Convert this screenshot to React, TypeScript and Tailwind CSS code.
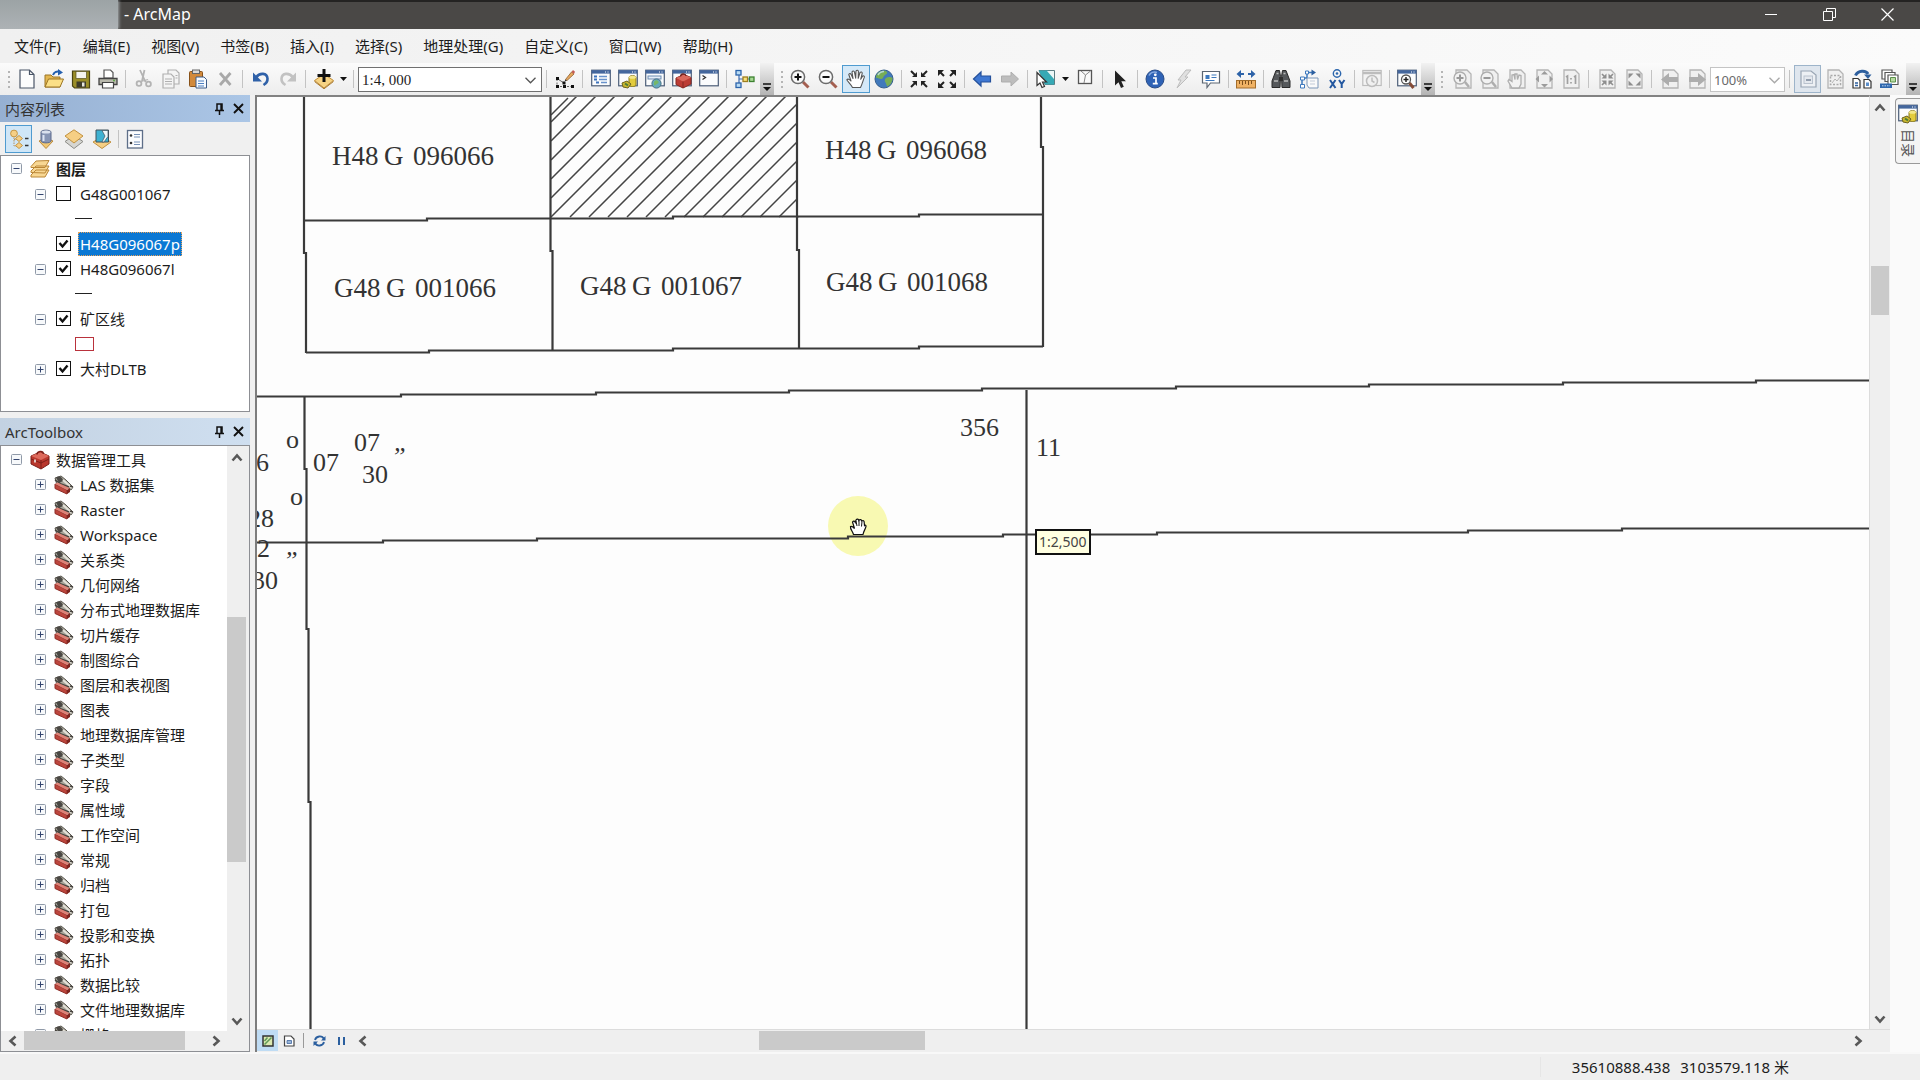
import { useState, type ReactNode } from "react";

const UI = "font-['Noto_Sans','Noto_Sans_CJK_SC',sans-serif]";

function Svg({ children, size = 20 }: { children: ReactNode; size?: number }) {
  return (
    <svg width={size} height={size} viewBox="0 0 20 20" fill="none" className="block shrink-0" aria-hidden="true">
      {children}
    </svg>
  );
}

/* ---------- toolbar icons ---------- */

const WindowFrame = () => (
  <>
    <rect x="0.7" y="1.2" width="18.6" height="15.6" fill="#fbfcfd" stroke="#4d5e78" strokeWidth="1.2" />
    <rect x="0.7" y="1.2" width="18.6" height="3.4" fill="#44679d" />
    <path d="M14 3h1M16.5 3h1" stroke="#fff" />
  </>
);

const PageGray = () => (
  <path d="M3 1h11l4 4v14H3z" fill="#f0f0f0" stroke="#b4b4b4" strokeWidth="1.3" />
);

const icons: Record<string, ReactNode> = {
  new: <path d="M3 1h9.500L17 5.500V19H3zM12.500 1v4.500H17" fill="#fdfdfd" stroke="#4b5668" strokeWidth="1.2" />,
  open: (
    <>
      <path d="M1 18V6h6l2 2h7v10z" fill="#e2b650" stroke="#9b7524" />
      <path d="M1 18l3.500-8H19.500L16 18z" fill="#fbdf86" stroke="#9b7524" />
      <path d="M9 6c1-3 4-4 7-3" stroke="#2560ae" strokeWidth="2" />
      <path d="M14 0l5 3.500-5 3z" fill="#2560ae" />
    </>
  ),
  save: (
    <>
      <path d="M1.500 2h17v17h-15l-2-2z" fill="#9a8e28" stroke="#494313" strokeWidth="1.2" />
      <rect x="5" y="2.500" width="10.500" height="7" fill="#f4f4ee" stroke="#57501a" strokeWidth=".7" />
      <rect x="5.500" y="12.500" width="9.500" height="6" fill="#3d3b2a" />
      <rect x="11" y="13.500" width="2.500" height="4" fill="#e7e7dd" />
    </>
  ),
  print: (
    <>
      <path d="M6 9V1h6.500L15 3.500V9z" fill="#fff" stroke="#555" strokeWidth="1.200" />
      <path d="M1 9.500h18v6H1z" fill="#b9b9ad" stroke="#444" strokeWidth="1.300" />
      <path d="M4.500 13.500h11V19h-11z" fill="#fff" stroke="#444" strokeWidth="1.200" />
      <circle cx="16" cy="11.500" r="1" fill="#5aa344" />
    </>
  ),
  cut: (
    <g stroke="#b3b3b3" strokeWidth="1.800">
      <path d="M6 1l5.500 12M10.500 1L8 12" />
      <circle cx="5" cy="14.500" r="2.400" />
      <circle cx="14.500" cy="15" r="2.400" />
      <path d="M7 12.500l7-2" strokeWidth="1.200" />
    </g>
  ),
  copy: (
    <g stroke="#b0b0b0" strokeWidth="1.200" fill="#f4f4f4">
      <path d="M7 1h8l3 3v11H7z" />
      <path d="M2 5h8l3 3v11H2z" />
      <path d="M4 10h7M4 12.500h7M4 15h7M14.500 6.500h2M14.500 9h2" />
    </g>
  ),
  paste: (
    <>
      <rect x="1.500" y="2.500" width="13" height="15" rx="1" fill="#d28a3c" stroke="#885118" />
      <rect x="4.500" y="1" width="7" height="3.500" fill="#dadada" stroke="#666" />
      <path d="M8 8h8l2.500 2.500V19H8z" fill="#f7fbff" stroke="#3c5c89" />
      <path d="M10 12h6M10 14.500h6M10 17h6" stroke="#4d7fc1" />
    </>
  ),
  del: <path d="M5 4l10.500 12M15.500 4L5 16" stroke="#a9a9a9" strokeWidth="2.800" />,
  undo: (
    <>
      <path d="M5 8.500C9 3 16 4 16.500 9.500c.2 3-1.500 5-4 6.500" stroke="#2f61a8" strokeWidth="2.600" />
      <path d="M2 3.500v9h9z" fill="#2f61a8" />
    </>
  ),
  redo: (
    <>
      <path d="M15 8.500C11 3 4 4 3.500 9.500c-.2 3 1.500 5 4 6.500" stroke="#c2c2c2" strokeWidth="2.600" />
      <path d="M18 3.500v9H9z" fill="#c2c2c2" />
    </>
  ),
  add: (
    <>
      <path d="M10 5l9.500 6.500L10 19 .5 11.500z" fill="#f6d384" stroke="#c08d38" />
      <path d="M.5 12.500L10 19.800l9.500-7.300" stroke="#a97a30" />
      <path d="M10 0v13M3.500 6.500h13" stroke="#111" strokeWidth="3" />
    </>
  ),
  editor: (
    <>
      <path d="M2 10v7.500h15" stroke="#666" strokeDasharray="2 1.500" />
      <path d="M2 9.500l7 4.500" stroke="#666" />
      <path d="M1 8h3v3H1zM1 16h3v3H1zM8 16h3v3H8zM16 16h3v3h-3zM7.500 12.500h3v3h-3z" fill="#111" />
      <path d="M10.500 10.500L16.500 3l2.500 2-7 6.500z" fill="#e8a860" stroke="#8c5f2d" strokeWidth=".8" />
      <path d="M16.500 3L18 1l2 1.700L19 5z" fill="#c45b53" />
      <path d="M9.500 12.500l1-2 1.500 1z" fill="#222" />
    </>
  ),
  toc: (
    <>
      <WindowFrame />
      <path d="M3 7.500h3M3 10.500h3M5 13.500h3" stroke="#3d73bd" strokeWidth="2" />
      <path d="M8 7.500h8M8 10.500h8M10 13.500h6" stroke="#6892cc" strokeWidth="1.300" />
    </>
  ),
  catalog: (
    <>
      <WindowFrame />
      <path d="M11 8.500c0-2.500 7-2.500 7 0v7.500c0 2-7 2-7 0z" fill="#e3cc3d" stroke="#8b7a1d" />
      <ellipse cx="14.500" cy="8.300" rx="3.500" ry="1.500" fill="#f4e88b" />
      <path d="M4 14l5-2 4 3-3 4-5-1z" fill="#c9b72f" stroke="#6c6320" />
      <path d="M7 14.500l3 2" stroke="#4d7c38" strokeWidth="2" />
    </>
  ),
  search: (
    <>
      <WindowFrame />
      <rect x="3" y="7" width="13" height="3" fill="#e3edf8" stroke="#6d8bb1" />
      <circle cx="11.500" cy="14.500" r="4.600" fill="#65aabd" stroke="#466f85" />
      <path d="M9 13c1-2 3-2 4-1s1 2-1 3-2 2-3 1z" fill="#77b867" />
    </>
  ),
  toolboxWin: (
    <>
      <WindowFrame />
      <path d="M4 9l8-3.500 7 3V15l-8 4-7-3.500z" fill="#bc3c34" stroke="#842720" />
      <path d="M4 9l7 3.500 8-4L12 5.500z" fill="#da685c" />
      <path d="M8.500 7.500c0-3 5-3.500 5.500-.5" stroke="#742520" strokeWidth="1.300" />
      <path d="M11 12.500V19" stroke="#842720" />
    </>
  ),
  python: (
    <>
      <WindowFrame />
      <path d="M3.500 6.500l3 2-3 2" stroke="#333" strokeWidth="1.300" />
    </>
  ),
  model: (
    <>
      <path d="M4 4v12M4 10h5M13 10h3" stroke="#3f6db0" strokeWidth="1.200" />
      <rect x="1" y="1.500" width="5" height="4.500" fill="#b9dbf4" stroke="#2b64ab" strokeWidth="1.300" />
      <rect x="1" y="14" width="5" height="4.500" fill="#b9dbf4" stroke="#2b64ab" strokeWidth="1.300" />
      <rect x="8" y="8" width="4.500" height="4.500" fill="#fbe27a" stroke="#9d7e20" strokeWidth="1.300" />
      <rect x="14.500" y="8" width="4.500" height="4.500" fill="#a6d893" stroke="#3c8130" strokeWidth="1.300" />
    </>
  ),
  zoomin: (
    <>
      <path d="M13 13l5.500 5.500" stroke="#a45f50" strokeWidth="3" />
      <circle cx="8" cy="8" r="6.600" fill="#fafafa" stroke="#6b6b6b" strokeWidth="1.500" />
      <path d="M8 4.500v7M4.500 8h7" stroke="#111" strokeWidth="2" />
    </>
  ),
  zoomout: (
    <>
      <path d="M13 13l5.500 5.500" stroke="#a45f50" strokeWidth="3" />
      <circle cx="8" cy="8" r="6.600" fill="#fafafa" stroke="#6b6b6b" strokeWidth="1.500" />
      <path d="M4.500 8h7" stroke="#111" strokeWidth="2" />
    </>
  ),
  hand: (
    <path
      d="M6.500 18.500C5 15.500 2 13 .8 10.800c1-1.300 2.500-.5 4.200 1.200L2.800 5.500c.8-1.500 2-1 2.500.2L7 9.500 6 3c.7-1.400 2.100-1.200 2.500.2l1.200 6L10 2c.8-1.200 2.200-1 2.400.3l-.2 7L14 3.500c1-1 2.300-.5 2.200.8l-1.500 6 2-3.300c1.200-.5 2 .2 1.600 1.400-1.300 3.200-2 6.500-3.800 10.100z"
      fill="#fff"
      stroke="#555"
      strokeWidth="1.100"
      strokeLinejoin="round"
    />
  ),
  globe: (
    <>
      <circle cx="10" cy="10" r="9" fill="#4179bb" stroke="#365f8d" />
      <path d="M4 4c3-3 8-2.500 9-1 1 2-2 2.500-3 4s-1 3-3 3-4-2-5-1c0-2 .5-3.500 2-5zM12 9c2-1.500 5-1 6.500 0 0 4-2 7-5 8.500-1.500-1-1-3-2-4s-1-3.500.5-4.500z" fill="#77ad55" />
      <path d="M4 6c1.500-2.500 3.500-3.500 6-3.500" stroke="#c6e2ee" strokeWidth="1.600" opacity=".8" />
    </>
  ),
  fixin: (
    <g stroke="#222" strokeWidth="2" fill="#222">
      <path d="M2 2l4 4M18 2l-4 4M2 18l4-4M18 18l-4-4" />
      <path d="M8 3v5H3zM12 3v5h5zM8 17v-5H3zM12 17v-5h5z" stroke="none" />
    </g>
  ),
  fixout: (
    <g stroke="#222" strokeWidth="2" fill="#222">
      <path d="M3 3l4 4M17 3l-4 4M3 17l4-4M17 17l-4-4" />
      <path d="M1 1h6L1 7zM19 1h-6l6 6zM1 19h6l-6-6zM19 19h-6l6-6z" stroke="none" />
    </g>
  ),
  back: <path d="M1.500 10l7.500-7v4h9.500v6H9v4z" fill="#3f78d2" stroke="#24509b" strokeWidth="1.200" />,
  fwd: <path d="M18.500 10L11 3v4H1.500v6H11v4z" fill="#bdbdbd" stroke="#adadad" />,
  select: (
    <>
      <path d="M4 1.500h15.500v14H10z" fill="#a8dbe0" stroke="#5c7d83" />
      <path d="M4 1.500h9l6 8v6h-9z" fill="#36a9b5" />
      <path d="M12 2h7v8z" fill="#ecf7f7" />
      <path d="M2 3.500v13l3-2.500 2 4.500 2.500-1-2-4.500h4z" fill="#fff" stroke="#333" strokeWidth="1.200" />
    </>
  ),
  clear: (
    <>
      <rect x="3.500" y="1.500" width="13" height="13" fill="#fafafa" stroke="#555" strokeWidth="1.300" />
      <path d="M6 2l4.500 4L9 14M10.500 6l5-4" stroke="#888" />
    </>
  ),
  pointer: <path d="M5 1.500v15l3.500-3.200L11 19l2.800-1.200-2.500-5.500H16z" fill="#222" />,
  info: (
    <>
      <circle cx="10" cy="10" r="9" fill="#2e62b5" stroke="#284b86" />
      <path d="M4 6.500c1.500-3 5-4 8-3" stroke="#88aae0" strokeWidth="1.600" />
      <circle cx="10.300" cy="5.800" r="1.400" fill="#fff" />
      <path d="M8 9h3v5.500h1.700M7.800 14.700h5" stroke="#fff" strokeWidth="1.700" />
    </>
  ),
  bolt: <path d="M13 1h5l-6 7h3L4 19l4-8H5z" fill="#e0e0e0" stroke="#bcbcbc" />,
  popup: (
    <>
      <path d="M1.500 2.500h17v11.500h-9L6 18.500V14H1.500z" fill="#fff" stroke="#5c6672" strokeWidth="1.200" />
      <rect x="4.500" y="6" width="4" height="4" fill="#3d78bd" />
      <path d="M10.500 6h5M10.500 8.500h5M4.500 11.500h9" stroke="#3d78bd" strokeWidth="1.200" />
    </>
  ),
  measure: (
    <>
      <path d="M3 5h5M12 5h5" stroke="#2c62a8" strokeWidth="2" />
      <path d="M.5 5l4.500-4v8zM19.500 5L15 1v8z" fill="#2c62a8" />
      <rect x=".5" y="11.500" width="19" height="7.500" fill="#f0b264" stroke="#a36d2a" />
      <path d="M3.500 12v3M6.500 12v4M9.500 12v3M12.500 12v4M15.500 12v3" stroke="#7d501c" />
    </>
  ),
  find: (
    <>
      <path d="M5 1.500h3.500l1 6-.5 11H1V12zM15 1.500h-3.500l-1 6 .5 11h8V12z" fill="#55585b" stroke="#2a2a2a" />
      <path d="M8 8h4v4H8z" fill="#2f2f2f" />
      <path d="M3 12h4M13 12h4M5.500 4.500h2M12.500 4.500h2" stroke="#bbb" strokeWidth="1.400" />
    </>
  ),
  route: (
    <>
      <path d="M3 18v-9h5V3.500h6" stroke="#3d78bd" strokeWidth="1.500" />
      <path d="M12.500.5L17 3.500l-4.500 3z" fill="#2b5f9f" />
      <path d="M1.500 15.500h4V19h-4zM1.500 8h4v3h-4zM6.500 2h3v3h-3z" fill="#fff" stroke="#3d78bd" />
      <path d="M8 9h11v10H10l-2-3z" fill="#fafafa" stroke="#7d97b8" />
      <path d="M11 12h5M11 15h5" stroke="#c2cbd8" />
    </>
  ),
  xy: (
    <>
      <circle cx="10" cy="4.500" r="3.700" stroke="#2c66ad" strokeWidth="1.400" />
      <circle cx="10" cy="4.500" r="1.300" fill="#2c66ad" />
      <path d="M3 11l5.500 8M8.500 11L3 19M12 11l2.700 4L17.500 11M14.700 15v4" stroke="#2458a0" strokeWidth="2" />
    </>
  ),
  time: (
    <g stroke="#bdbdbd">
      <rect x=".8" y="1.500" width="18.400" height="15" fill="#f3f3f3" strokeWidth="1.200" />
      <path d="M1 4h18" strokeWidth="2.500" />
      <circle cx="10" cy="12" r="5.500" fill="#f0f0f0" strokeWidth="1.500" />
      <path d="M10 8.500V12l2.500 1.500" strokeWidth="1.500" />
    </g>
  ),
  viewer: (
    <>
      <WindowFrame />
      <path d="M12.500 14l4 5" stroke="#844b37" strokeWidth="3" />
      <circle cx="9" cy="10.500" r="4.500" fill="#fff" stroke="#555" strokeWidth="1.300" />
      <path d="M9 8v5M6.500 10.500h5" stroke="#222" strokeWidth="1.500" />
    </>
  ),
  pzin: (
    <g stroke="#aeaeae" strokeWidth="1.400">
      <PageGray />
      <path d="M12 13l4 5" strokeWidth="2.500" />
      <circle cx="7" cy="9" r="6" fill="#f2f2f2" />
      <path d="M7 5.500v7M3.500 9h7" stroke="#999" strokeWidth="2" />
    </g>
  ),
  pzout: (
    <g stroke="#aeaeae" strokeWidth="1.400">
      <PageGray />
      <path d="M12 13l4 5" strokeWidth="2.500" />
      <circle cx="7" cy="9" r="6" fill="#f2f2f2" />
      <path d="M3.500 9h7" stroke="#999" strokeWidth="2" />
    </g>
  ),
  phand: (
    <g stroke="#aeaeae" strokeWidth="1.300">
      <PageGray />
      <path d="M5 19l-4-7 1-1.500 3 2V6l2-.5 1 5V5h2l.5 5.500L12 6l2 .5V15l-2 4z" fill="#f2f2f2" />
    </g>
  ),
  pfull: (
    <>
      <PageGray />
      <path d="M10.500 2l3.500 3.500H7zM10.500 18.500L7 15h7zM1.500 10L5 6.500v7zM19 10l-3.500-3.500v7z" fill="#9c9c9c" />
    </>
  ),
  p11: (
    <>
      <PageGray />
      <path d="M5 8l1.500-1v8M13 8l1.500-1v8M10 9v1.500M10 13v1.500" stroke="#a0a0a0" strokeWidth="1.700" />
    </>
  ),
  pfixin: (
    <>
      <PageGray />
      <path d="M9.500 4.500v5h-5zM11.500 4.500v5h5zM9.500 16.500v-5h-5zM11.500 16.500v-5h5z" fill="#8e8e8e" />
      <path d="M5 5l3 3M16 5l-3 3M5 16l3-3M16 16l-3-3" stroke="#8e8e8e" strokeWidth="1.600" />
    </>
  ),
  pfixout: (
    <>
      <PageGray />
      <path d="M4.500 4.500h5l-5 5zM16.500 4.500h-5l5 5zM4.500 16.500h5l-5-5zM16.500 16.500h-5l5-5z" fill="#8e8e8e" />
    </>
  ),
  pback: (
    <>
      <PageGray />
      <path d="M1 10.500L9 4v4h9v5H9v4z" fill="#adadad" />
    </>
  ),
  pfwd: (
    <>
      <PageGray />
      <path d="M19 10.500L11 4v4H2v5h9v4z" fill="#adadad" />
    </>
  ),
  draft: (
    <>
      <path d="M3 2h10l5 4v12H3z" fill="#edf0f4" stroke="#98a4b3" strokeWidth="1.200" />
      <rect x="6" y="7" width="8.500" height="7.500" fill="#e4e8ee" stroke="#b9c2ce" />
      <path d="M8 11h5" stroke="#8996a6" strokeWidth="1.800" />
    </>
  ),
  focus: (
    <>
      <PageGray />
      <path d="M5.500 6.500h10v9h-10z" stroke="#aaa" strokeWidth="1.500" strokeDasharray="2 1.500" />
      <path d="M7 14l3-4 2 2 3-4" stroke="#b5b5b5" />
    </>
  ),
  change: (
    <>
      <path d="M3.500 6.500C6 1 14 1 16 5" stroke="#2d5f9e" strokeWidth="3" />
      <path d="M12 5.500h7.500L16 10z" fill="#2d5f9e" />
      <path d="M1 9.500h5l2 2V19H1zM12 10.500h5l2 2V19h-7z" fill="#fff" stroke="#333" strokeWidth="1.200" />
      <path d="M3 14h3M3 16.500h3" stroke="#2d5f9e" strokeWidth="1.500" />
      <path d="M14 13.500h3V17h-3z" fill="#5c8fcb" />
    </>
  ),
  ddp: (
    <>
      <path d="M3 1h10v9H3z" fill="#fff" stroke="#555" strokeWidth="1.200" />
      <path d="M6 3.500h10v9H6z" fill="#fff" stroke="#555" strokeWidth="1.200" />
      <path d="M9 6h10v9.500H9z" fill="#fff" stroke="#555" strokeWidth="1.200" />
      <path d="M11.500 8.500h5V13h-5z" fill="#b7dba0" stroke="#5b8f4a" />
      <path d="M1 14.500h12V19H1z" fill="#2f67ae" />
      <path d="M3 16.800h8" stroke="#bcd4ef" strokeDasharray="1.500 1" />
    </>
  ),
  listDrawing: (
    <>
      <path d="M5 6v11h9M5 10.500h7" stroke="#b79058" strokeDasharray="1.500 1" />
      <circle cx="5" cy="4.500" r="3.400" fill="#f5cf86" stroke="#c59644" />
      <path d="M10 6.500l3.500 3-3.500 3-3.500-3zM10 13.500l3.500 3-3.500 3-3.500-3z" fill="#f5cf86" stroke="#c59644" />
      <path d="M16 9.500h3.500M16 16.500h3.500" stroke="#333" strokeWidth="1.600" />
    </>
  ),
  listSource: (
    <>
      <path d="M3 12l7-3 7 3-7 7.500z" fill="#f2c874" stroke="#bb8a3b" />
      <path d="M5 3c0-2.500 10-2.500 10 0v9c0 2.500-10 2.500-10 0z" fill="#8795b5" stroke="#5c6a8c" />
      <ellipse cx="10" cy="3" rx="4.500" ry="1.600" fill="#d9e0ee" />
      <path d="M7.500 6v6" stroke="#dbe3f3" strokeWidth="2" />
    </>
  ),
  listVisible: (
    <>
      <path d="M10 6.500l9 6-9 7-9-7z" fill="#d6d6d2" stroke="#8d8d88" />
      <path d="M10 .8l9 6.200-9 7-9-7z" fill="#f6cf84" stroke="#c1913f" />
    </>
  ),
  listSelection: (
    <>
      <path d="M10 8l9 5-9 6.500L1 13z" fill="#f6cf84" stroke="#c1913f" />
      <path d="M4 1h12.500v12H4z" fill="#3eb2d2" stroke="#41525c" />
      <path d="M10 1.500h6v6l-4 5.500h-2l3-6z" fill="#eef8fa" stroke="#41525c" strokeWidth=".7" />
    </>
  ),
  options: (
    <>
      <rect x="2.500" y="1.500" width="15" height="17.500" fill="#fbfcfe" stroke="#5d6e88" strokeWidth="1.300" />
      <circle cx="6" cy="6.500" r="1.300" fill="#333" />
      <circle cx="6" cy="14" r="1.300" fill="#333" />
      <path d="M9 5.500h6M9 8h6M9 13h6M9 15.500h6" stroke="#7690b5" strokeWidth="1.200" />
    </>
  ),
};

type Item = [string, string] | "|" | "v";

const standardItems: Item[] = [
  ["new", "新建"], ["open", "打开"], ["save", "保存"], ["print", "打印"], "|",
  ["cut", "剪切"], ["copy", "复制"], ["paste", "粘贴"], ["del", "删除"], "|",
  ["undo", "撤消"], ["redo", "恢复"], "|",
  ["add", "添加数据"], "v", "|",
];
const windowItems: Item[] = [
  "|", ["editor", "编辑器工具条"], "|",
  ["toc", "内容列表"], ["catalog", "目录"], ["search", "搜索"], ["toolboxWin", "ArcToolbox"], ["python", "Python"], "|",
  ["model", "模型构建器"],
];
const toolItems: Item[] = [
  ["zoomin", "放大"], ["zoomout", "缩小"], ["hand", "平移"], ["globe", "全图"], "|",
  ["fixin", "固定比例放大"], ["fixout", "固定比例缩小"], "|",
  ["back", "上一视图"], ["fwd", "下一视图"], "|",
  ["select", "选择要素"], "v", ["clear", "清除所选要素"], "|",
  ["pointer", "选择元素"], "|",
  ["info", "识别"], ["bolt", "超链接"], ["popup", "HTML 弹出窗口"], "|",
  ["measure", "测量"], "|",
  ["find", "查找"], ["route", "查找路径"], ["xy", "转到 XY"], "|",
  ["time", "时间滑块"], "|", ["viewer", "创建查看器窗口"],
];
const layoutItems: Item[] = [
  ["pzin", "页面放大"], ["pzout", "页面缩小"], ["phand", "页面平移"], ["pfull", "缩放整个页面"], ["p11", "缩放至 100%"], "|",
  ["pfixin", "页面固定放大"], ["pfixout", "页面固定缩小"], "|",
  ["pback", "返回"], ["pfwd", "前进"],
];
const layoutEndItems: Item[] = [
  "|", ["draft", "切换描绘模式"], ["focus", "聚焦数据框"], ["change", "更改布局"], ["ddp", "数据驱动页面"],
];

function ToolItems({ items, wide = false }: { items: Item[]; wide?: boolean }) {
  return (
    <>
      {items.map((it, i) => {
        if (it === "|")
          return (
            <span key={i} className={`flex shrink-0 justify-center ${wide ? "w-[7px]" : "w-[9px]"}`}>
              <span className="h-[18px] w-px bg-[#c3c3c3]" />
            </span>
          );
        if (it === "v")
          return (
            <button key={i} aria-label="更多" className="flex w-3 shrink-0 justify-center">
              <svg width="7" height="4" viewBox="0 0 7 4"><path d="M0 0h7L3.500 4z" fill="#111" /></svg>
            </button>
          );
        const state =
          it[0] === "hand"
            ? "border border-[#4f9bd0] bg-[#d5e9f8]"
            : it[0] === "draft"
              ? "border border-[#9db4ca] bg-[#dfe6ee]"
              : "";
        return (
          <button
            key={i}
            aria-label={it[1]}
            title={it[1]}
            className={`flex h-7 shrink-0 items-center justify-center ${wide ? "w-7" : "w-[27px]"} ${state}`}
          >
            <Svg>{icons[it[0]]}</Svg>
          </button>
        );
      })}
    </>
  );
}

function Grip({ className = "" }: { className?: string }) {
  return (
    <span className={`flex shrink-0 flex-col items-center justify-center gap-[3px] ${className}`}>
      {[0, 1, 2, 3].map((i) => (
        <span key={i} className="size-[2px] bg-[#b5b5b5]" />
      ))}
    </span>
  );
}

function Overflow() {
  return (
    <button aria-label="工具条选项" className="flex h-8 w-[14px] shrink-0 items-end justify-center bg-linear-to-b from-[#f2f2f2] to-[#b4b4b4] pb-1">
      <svg width="8" height="8" viewBox="0 0 8 8"><path d="M0 1h8" stroke="#111" strokeWidth="1.500" /><path d="M0 4h8L4 8z" fill="#111" /></svg>
    </button>
  );
}

function Chevron({ dir }: { dir: "up" | "down" | "left" | "right" }) {
  const d = {
    up: "M1.500 8.500L6 3.500l4.500 5",
    down: "M1.500 3.500L6 8.500l4.500-5",
    left: "M8.500 1.500L3.500 6l5 4.500",
    right: "M3.500 1.500L8.500 6l-5 4.500",
  }[dir];
  return (
    <svg width="12" height="12" viewBox="0 0 12 12" fill="none"><path d={d} stroke="#585858" strokeWidth="2.600" /></svg>
  );
}

/* ---------- left panels ---------- */

function PanelHeader({ title, tone }: { title: string; tone: string }) {
  return (
    <header className={`flex h-[27px] shrink-0 items-center pr-[2px] pl-[5px] ${tone}`}>
      <h2 className="flex-1 text-[15px] leading-5 text-[#333]">{title}</h2>
      <button aria-label={`固定${title}`} className="flex w-[19px] justify-center">
        <svg width="11" height="12" viewBox="0 0 11 12" fill="none"><path d="M3 7V1h5v6M1 7.500h9M5.500 8v4" stroke="#111" strokeWidth="1.500" /><path d="M7.200 1v6" stroke="#111" strokeWidth="1.800" /></svg>
      </button>
      <button aria-label={`关闭${title}`} className="flex w-[19px] justify-center">
        <svg width="11" height="11" viewBox="0 0 11 11"><path d="M1 1l9 9M10 1l-9 9" stroke="#111" strokeWidth="1.900" /></svg>
      </button>
    </header>
  );
}

function Expander({ open }: { open: boolean }) {
  return (
    <button aria-label={open ? "折叠" : "展开"} className="shrink-0">
      <svg width="11" height="11" viewBox="0 0 11 11" className="block">
        <rect x=".5" y=".5" width="10" height="10" rx="1" fill="#f7f9fb" stroke="#909aa8" />
        <path d={open ? "M2.500 5.500h6" : "M2.500 5.500h6M5.500 2.500v6"} stroke="#34456f" />
      </svg>
    </button>
  );
}

function LayerRow({ name, checked, expander, selected }: { name: string; checked: boolean; expander?: boolean; selected?: boolean }) {
  const [on, setOn] = useState(checked);
  return (
    <li className="flex h-[25px] items-center pl-[34px]">
      <span className="w-[21px] shrink-0">{expander !== undefined && <Expander open={expander} />}</span>
      <label className="flex items-center gap-[7px]">
        <span className="grid size-[15px] shrink-0">
          <input type="checkbox" checked={on} onChange={() => setOn(!on)} className="col-start-1 row-start-1 size-[15px] appearance-none border border-[#111] bg-white" />
          {on && (
            <svg viewBox="0 0 15 15" className="pointer-events-none col-start-1 row-start-1" fill="none"><path d="M3.500 7l3 3.500 5-6" stroke="#111" strokeWidth="2.400" /></svg>
          )}
        </span>
        <span className={`border border-dotted px-px text-[15px] leading-[22px] ${selected ? "border-[#e8a35b] bg-[#0a78d4] text-white" : "border-transparent"}`}>{name}</span>
      </label>
    </li>
  );
}

function LineSymbol() {
  return (
    <li className="flex h-[25px] items-center pl-[74px]"><span className="h-px w-[17px] bg-[#222]" /></li>
  );
}

function ToolsetIcon() {
  return (
    <Svg>
      <path d="M1 3l6-2 5 4 7 7-2 3-6-3-8-2z" fill="#a9a79c" stroke="#5b5850" />
      <path d="M2 2.500c3-2.500 7 0 7 3.500L5 8z" fill="#4a4844" />
      <path d="M9 5l9 8" stroke="#e3e1d8" strokeWidth="2" />
      <path d="M1 5l6 4 8 3M16 11l3 1" stroke="#45423d" strokeWidth="1.500" />
      <path d="M1 9l12 6v4L1 13.500z" fill="#bd453c" stroke="#8d2d26" />
      <path d="M1 9l2.500-1.500L15.500 13 13 15z" fill="#dd8276" />
      <path d="M13 15l3-2v4l-3 2z" fill="#7d241e" />
    </Svg>
  );
}

const toolsets = [
  "LAS 数据集", "Raster", "Workspace", "关系类", "几何网络", "分布式地理数据库", "切片缓存", "制图综合",
  "图层和表视图", "图表", "地理数据库管理", "子类型", "字段", "属性域", "工作空间", "常规", "归档", "打包",
  "投影和变换", "拓扑", "数据比较", "文件地理数据库", "栅格",
];

function Contents() {
  return (
    <section className="flex shrink-0 flex-col">
      <PanelHeader title="内容列表" tone="bg-linear-to-r from-[#96b0d2] to-[#abc6e6]" />
      <div className="flex h-[33px] items-center pl-[5px]">
        {["listDrawing", "listSource", "listVisible", "listSelection"].map((n, i) => (
          <button key={n} aria-label={["按绘制顺序列出", "按源列出", "按可见性列出", "按选择列出"][i]} className={`flex h-7 items-center justify-center ${i === 0 ? "w-[27px] border border-[#4f9bd0] bg-[#cfe6f7]" : "w-7"}`}>
            <Svg>{icons[n]}</Svg>
          </button>
        ))}
        <span className="mx-[2px] h-[18px] w-px bg-[#c3c3c3]" />
        <button aria-label="选项" className="flex w-7 justify-center"><Svg>{icons.options}</Svg></button>
      </div>
      <ul className="h-[257px] overflow-hidden border border-[#8d8f94] bg-white">
        <li className="flex h-[25px] items-center pl-[10px]">
          <Expander open />
          <span className="mr-[6px] ml-2">
            <Svg>
              <path d="M1 16l5-5h13l-4 7H1zM1 12l5-5h13l-4 7-14-.5zM1 7.500L6 2l13-.5-4 7H1z" fill="#f8d793" stroke="#bb8737" />
            </Svg>
          </span>
          <span className="text-[15px] leading-5 font-bold">图层</span>
        </li>
        <LayerRow name="G48G001067" checked={false} expander />
        <LineSymbol />
        <LayerRow name="H48G096067p" checked selected />
        <LayerRow name="H48G096067l" checked expander />
        <LineSymbol />
        <LayerRow name="矿区线" checked expander />
        <li className="flex h-[25px] items-center pl-[74px]"><span className="h-[14px] w-[19px] border border-[#b9323c]" /></li>
        <LayerRow name="大村DLTB" checked expander={false} />
      </ul>
    </section>
  );
}

function Toolbox() {
  return (
    <section className="mt-[6px] flex min-h-0 flex-1 flex-col">
      <PanelHeader title="ArcToolbox" tone="bg-linear-to-r from-[#c3d2e2] to-[#cfdff0]" />
      <div className="flex min-h-0 flex-1 flex-col border border-[#8d8f94] bg-white">
        <div className="flex min-h-0 flex-1">
          <ul className="min-w-0 flex-1 overflow-hidden pt-px">
            <li className="flex h-[25px] items-center pl-[10px]">
              <Expander open />
              <span className="mr-[6px] ml-2">
                <Svg>
                  <path d="M1 6l9-4 9 4v8l-8 5L1 14z" fill="#b9372d" stroke="#7c1f19" />
                  <path d="M1 6l9-4 9 4-8 4z" fill="#dd6a5c" />
                  <path d="M7 4.500C7 1 13 0 13.500 4" stroke="#7c1f19" strokeWidth="1.500" />
                  <path d="M11 10v9M1 9l10 4 8-4" stroke="#7c1f19" />
                  <path d="M5 9.500v3" stroke="#e9d9d5" strokeWidth="1.800" />
                </Svg>
              </span>
              <span className="text-[15px] leading-5">数据管理工具</span>
            </li>
            {toolsets.map((t) => (
              <li key={t} className="flex h-[25px] items-center pl-[34px]">
                <Expander open={false} />
                <span className="mr-[6px] ml-2"><ToolsetIcon /></span>
                <span className="text-[15px] leading-5 whitespace-nowrap">{t}</span>
              </li>
            ))}
          </ul>
          <div className="flex w-[19px] shrink-0 flex-col bg-[#efefef]">
            <button aria-label="向上滚动" className="flex h-6 items-center justify-center"><Chevron dir="up" /></button>
            <div className="flex-[147]" />
            <div className="flex-[244] bg-[#cacaca]" />
            <div className="flex-[149]" />
            <button aria-label="向下滚动" className="flex h-5 items-center justify-center"><Chevron dir="down" /></button>
          </div>
          <div className="w-[3px] shrink-0 bg-[#efefef]" />
        </div>
        <div className="flex h-5 shrink-0 bg-[#efefef]">
          <button aria-label="向左滚动" className="flex w-[23px] items-center justify-center"><Chevron dir="left" /></button>
          <div className="mb-px flex-[161] bg-[#cacaca]" />
          <div className="flex-[18]" />
          <button aria-label="向右滚动" className="flex w-[25px] items-center justify-center"><Chevron dir="right" /></button>
          <div className="w-[21px]" />
        </div>
      </div>
    </section>
  );
}

/* ---------- map canvas (drawn in map pixels, origin 257,97) ---------- */

const sheetLabels: [number, number, string, string][] = [
  [332, 165, "H48", "096066"],
  [825, 159, "H48", "096068"],
  [334, 297, "G48", "001066"],
  [580, 295, "G48", "001067"],
  [826, 291, "G48", "001068"],
];

const marks: [number, number, string][] = [
  [286, 448, "o"], [290, 505, "o"], [256, 471, "6"], [313, 471, "07"], [354, 451, "07"], [362, 483, "30"],
  [248, 527, "28"], [257, 557, "2"], [252, 589, "30"], [960, 436, "356"], [1036, 456, "11"],
];

const hatch = Array.from({ length: 19 }, (_, k) => {
  const c = 673 + k * 19;
  const x1 = Math.max(551, c - 217);
  const x2 = Math.min(797, c - 96);
  return `M${x1} ${c - x1}L${x2} ${c - x2}`;
}).join("");

function MapCanvas() {
  return (
    <div className="relative min-h-0 min-w-0 flex-1 overflow-hidden bg-[#fdfdfd]">
      <svg width="1613" height="936" viewBox="257 97 1613 936" fill="none" className="absolute top-0 left-0" role="img" aria-label="地图">
        <circle cx="858" cy="526" r="30" fill="#f8f9b2" />
        <path d={`${hatch}M551 115L568 98`} stroke="#444" strokeWidth="1.500" />
        <g stroke="#3a3a3a" strokeWidth="2.200">
          <path d="M304 96V253H306V353M550.500 96V251H552.500V350M797 96V250H799V348M1041 96V147H1043V347" />
          <path d="M304 220.500H427V218.500H673V216.500H919V214.500H1043" />
          <path d="M306 352.500H429V350.500H673V348.500H919V346.500H1043" />
          <path d="M256 396.500H401V394.500H596V392.500H789V390.500H982V388.500H1176V386.500H1369V384.500H1563V382.500H1756V380.500H1870" />
          <path d="M256 542.500H383V540.500H537V538.500H848V536.500H1003V534.500H1157V532.500H1468V530.500H1622V528.500H1870" />
          <path d="M304.500 396V469H306.500V629H308.500V802H310.500V1032M1026.500 390V1032" />
        </g>
        <g fill="#333" className="font-['Liberation_Serif','Noto_Sans_CJK_SC',serif] text-[27px]">
          {sheetLabels.map(([x, y, a, b]) => (
            <g key={a + b}>
              <text x={x} y={y}>{a}</text>
              <text x={x + 52} y={y}>G</text>
              <text x={x + 81} y={y}>{b}</text>
            </g>
          ))}
        </g>
        <g fill="#333" className="font-['Liberation_Serif','Noto_Sans_CJK_SC',serif] text-[26px]">
          {marks.map(([x, y, t]) => (
            <text key={`${x}-${y}`} x={x} y={y}>{t}</text>
          ))}
          <text x="394" y="451" className="italic">„</text>
          <text x="286" y="555" className="italic">„</text>
        </g>
        <path
          d="M853.500 534.500C852.500 531 850 529 850.500 526.500c1.500-.8 2.700.5 4 2L852.500 522c1-1.500 2.200-1 2.800.5L856 520c1-1.300 2.500-1 2.800.5 1-1.500 2.600-1 2.900.5 1.500-1 2.600 0 2.500 1.500l.3 3c1-.8 1.600-.3 1.500.8-.6 3-2.500 5-3 8.200z"
          fill="#fff"
          stroke="#111"
          strokeWidth="1.200"
        />
        <path d="M856 521l1 5M859 520.500v5.500M862 521.500l-.5 5" stroke="#111" />
      </svg>
      <div role="tooltip" className="absolute top-[432px] left-[778px] border-2 border-[#111] bg-[#ffffe1] px-0.5 text-sm leading-[22px] text-[#444]">1:2,500</div>
    </div>
  );
}

function MapFooter() {
  return (
    <div className="flex h-[23px] shrink-0 items-stretch border-t border-[#dcdcdc] bg-[#efefef] pb-px">
      <button aria-label="数据视图" className="flex w-[21px] items-center justify-center bg-[#bfdcf4]">
        <svg width="12" height="12" viewBox="0 0 12 12"><rect x="1" y="1" width="10" height="10" fill="#dbe8b0" stroke="#333" strokeWidth="1.500" /><path d="M2.500 9.500l7-7M2.500 6l3-3.500" stroke="#5f9a57" strokeWidth="1.500" /></svg>
      </button>
      <button aria-label="布局视图" className="flex w-[22px] items-center justify-center">
        <svg width="12" height="12" viewBox="0 0 12 12" fill="#fff"><path d="M1.500 1H8l3 3v7H1.500z" stroke="#444" strokeWidth="1.200" /><path d="M4 5.500h4.500v3H4z" fill="#9ab6d8" stroke="#3f66a0" strokeWidth=".8" /></svg>
      </button>
      <span className="mx-[3px] my-[3px] w-px bg-[#999]" />
      <button aria-label="刷新" className="flex w-[25px] items-center justify-center">
        <svg width="13" height="12" viewBox="0 0 13 12" fill="none"><path d="M2 5C3 1 9 0 11 4M11 7C10 11 4 12 2 8" stroke="#2b5f9f" strokeWidth="1.800" /><path d="M12.500 1v4.500H8zM.5 11V6.500H5z" fill="#2b5f9f" /></svg>
      </button>
      <button aria-label="暂停绘制" className="flex w-[18px] items-center justify-center gap-[3px]">
        <span className="h-2 w-[2px] bg-[#2b5f9f]" /><span className="h-2 w-[2px] bg-[#2b5f9f]" />
      </button>
      <button aria-label="向左滚动" className="flex w-[26px] items-center justify-center"><Chevron dir="left" /></button>
      <div className="flex-[383]" />
      <div className="my-px flex-[166] bg-[#cacaca]" />
      <div className="flex-[922]" />
      <button aria-label="向右滚动" className="flex w-6 items-center justify-center"><Chevron dir="right" /></button>
      <div className="w-5" />
    </div>
  );
}

const menus = ["文件(F)", "编辑(E)", "视图(V)", "书签(B)", "插入(I)", "选择(S)", "地理处理(G)", "自定义(C)", "窗口(W)", "帮助(H)"];

export default function App() {
  return (
    <div className={`flex h-screen flex-col overflow-hidden bg-[#f0f0f0] text-[#1c1c1c] ${UI}`}>
      <div className="flex h-[29px] shrink-0 items-stretch border-t-2 border-[#242322] bg-[#4a4846] text-white">
        <div className="-mt-0.5 w-[118px] bg-linear-to-b from-[#9ca3a5] to-[#adb2b5] shadow-[1px_0_3px_#a0a5a8]" />
        <h1 className="flex-1 pl-[6px] text-base leading-6">- ArcMap</h1>
        <button aria-label="最小化" className="flex w-[58px] items-center justify-center pb-[2px]">
          <svg width="12" height="12" viewBox="0 0 12 12"><path d="M0 5.500h12" stroke="#fff" /></svg>
        </button>
        <button aria-label="还原" className="flex w-[58px] items-center justify-center pb-[2px]">
          <svg width="13" height="13" viewBox="0 0 13 13" fill="none" stroke="#fff"><path d="M.5 3.500h9v9h-9zM3.500 3V.5h9v9H10" /></svg>
        </button>
        <button aria-label="关闭" className="mr-[4px] flex w-[58px] items-center justify-center pb-[2px]">
          <svg width="13" height="13" viewBox="0 0 13 13"><path d="M.5.5l12 12M12.500.5l-12 12" stroke="#fff" strokeWidth="1.200" /></svg>
        </button>
      </div>

      <nav className="flex h-[34px] shrink-0 items-center bg-linear-to-r from-[#f0f0f0] to-[#fbfbfb] pl-1">
        {menus.map((m) => (
          <button key={m} className="pr-[11px] pl-[10px] text-[15px] leading-5 whitespace-nowrap first:pr-3">{m}</button>
        ))}
      </nav>

      <div className="flex h-8 shrink-0 items-center bg-linear-to-b from-[#fbfbfb] to-[#ededed]">
        <Grip className="w-[13px] pl-1" />
        <ToolItems items={standardItems} />
        <div className="relative h-[25px] w-[184px] shrink-0">
          <select aria-label="地图比例" className="h-full w-full appearance-none border border-[#707070] bg-white pl-[3px] font-['Liberation_Serif','Noto_Sans_CJK_SC',serif] text-[15px] leading-5">
            <option>1:4, 000</option>
          </select>
          <svg width="11" height="7" viewBox="0 0 11 7" fill="none" className="pointer-events-none absolute top-[10px] right-[6px]"><path d="M.5.8l5 5 5-5" stroke="#555" strokeWidth="1.300" /></svg>
        </div>
        <ToolItems items={windowItems} />
        <span className="w-[2px]" />
        <Overflow />
        <Grip className="w-3 pl-1" />
        <ToolItems items={toolItems} wide />
        <Overflow />
        <Grip className="w-[14px]" />
        <ToolItems items={layoutItems} />
        <div className="relative h-[25px] w-[75px] shrink-0">
          <select aria-label="布局缩放" disabled className="h-full w-full appearance-none border border-[#c4c4c4] bg-white pl-[3px] text-[13px] leading-5 text-[#6a6a6a] opacity-100">
            <option>100%</option>
          </select>
          <svg width="11" height="7" viewBox="0 0 11 7" fill="none" className="pointer-events-none absolute top-[10px] right-[5px]"><path d="M.5.8l5 5 5-5" stroke="#aaa" strokeWidth="1.400" /></svg>
        </div>
        <ToolItems items={layoutEndItems} />
        <span className="flex-1" />
        <Overflow />
      </div>

      <div className="flex min-h-0 flex-1">
        <aside className="flex w-[250px] shrink-0 flex-col">
          <Contents />
          <Toolbox />
        </aside>
        <main className="ml-[5px] flex min-w-0 flex-1 flex-col border-l-2 border-[#7d7d7d]">
          <div className="flex min-h-0 flex-1">
            <div className="flex min-h-0 min-w-0 flex-1 flex-col border-t-2 border-[#828282]">
              <MapCanvas />
            </div>
            <div className="flex w-[21px] shrink-0 flex-col border-t-2 border-l border-t-[#828282] border-l-[#dcdcdc] bg-[#efefef]">
              <button aria-label="向上滚动" className="flex h-[22px] items-center justify-center"><Chevron dir="up" /></button>
              <div className="flex-[147]" />
              <div className="mx-px flex-[49] bg-[#cacaca]" />
              <div className="flex-[694]" />
              <button aria-label="向下滚动" className="flex h-5 items-center justify-center"><Chevron dir="down" /></button>
            </div>
          </div>
          <MapFooter />
        </main>
        <aside className="flex w-[30px] shrink-0 flex-col items-end bg-[#fafafa] pt-[3px]">
          <button className="flex h-[66px] w-[25px] flex-col items-center gap-1 rounded-l border border-r-0 border-[#9a9a9a] bg-[#f4f4f4] pt-[5px] text-sm text-[#555]">
            <Svg>{icons.catalog}</Svg>
            <span className="flex h-[30px] w-5 items-center justify-center">
              <span className="shrink-0 rotate-90 leading-5 whitespace-nowrap">目录</span>
            </span>
          </button>
        </aside>
      </div>

      <footer className="flex h-7 shrink-0 items-center justify-end border-t-2 border-[#f8f8f8] bg-[#efefef] pr-[131px] text-[15px] leading-5">
        <span className="mr-[31px] h-5 w-px bg-[#e6e6e6]" />
        <output className="flex gap-[10px]"><span>35610888.438</span><span>3103579.118 米</span></output>
      </footer>
    </div>
  );
}
